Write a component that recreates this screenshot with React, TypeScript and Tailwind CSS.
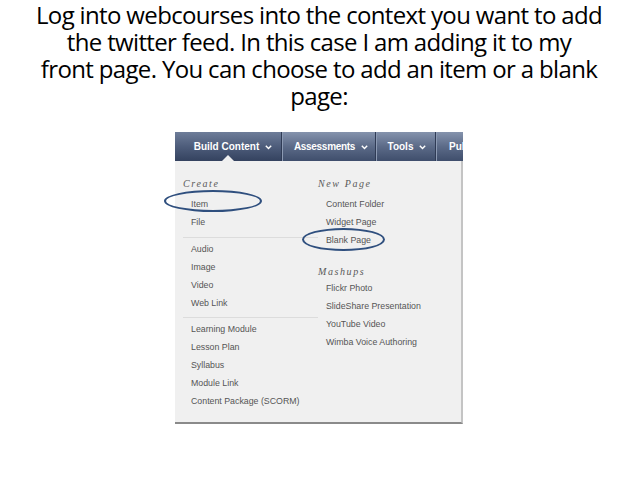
import React from "react"

const leftGroups: string[][] = [
  ["Item", "File"],
  ["Audio", "Image", "Video", "Web Link"],
  ["Learning Module", "Lesson Plan", "Syllabus", "Module Link", "Content Package (SCORM)"],
]

const newPage = ["Content Folder", "Widget Page", "Blank Page"]
const mashups = ["Flickr Photo", "SlideShare Presentation", "YouTube Video", "Wimba Voice Authoring"]

function Chevron() {
  return (
    <svg width="7" height="5" viewBox="0 0 7 5" className="ml-[6px] mt-[1px] shrink-0">
      <path d="M0.8 0.8 L3.5 3.6 L6.2 0.8" fill="none" stroke="#fff" strokeWidth="1.4" />
    </svg>
  )
}

function Heading({ children }: { children: string }) {
  return (
    <div className="flex h-[18px] items-center font-['Liberation_Serif',serif] text-[10px] italic tracking-[1.6px] text-[#5a5a5a]">
      {children}
    </div>
  )
}

function Row({ children }: { children: string }) {
  return (
    <div className="flex h-[18px] items-center pl-[8px] text-[8.8px] text-[#555]">{children}</div>
  )
}

export default function App() {
  return (
    <div className="h-[478px] w-[638px] overflow-hidden bg-white">
      {/* Slide title */}
      <div className="pt-[1px] text-center font-['Open_Sans',sans-serif] text-[24px] leading-[27px] tracking-[-0.65px] text-black">
        Log into webcourses into the context you want to add
        <br />
        the twitter feed. In this case I am adding it to my
        <br />
        front page. You can choose to add an item or a blank
        <br />
        page:
      </div>

      {/* Screenshot */}
      <div className="relative ml-[175px] mt-[23px] w-[288px] font-['Liberation_Sans',sans-serif]">
        <div className="flex h-[29px] overflow-hidden bg-gradient-to-b from-[#8593ad] via-[#5c6b88] to-[#3f4e6c] text-[10px] font-bold text-white">
          <div className="relative flex w-[106px] shrink-0 items-center justify-center bg-gradient-to-b from-[#6e7d99] via-[#4e5d7b] to-[#34425f] pl-[10px]">
            <span className="whitespace-nowrap">Build Content</span>
            <Chevron />
            <div className="absolute bottom-0 left-[47px] h-0 w-0 border-x-[6px] border-b-[6px] border-x-transparent border-b-[#f0f0f0]" />
          </div>
          <div className="w-px shrink-0 bg-[#2f3b55]" />
          <div className="flex w-[93px] shrink-0 items-center justify-center border-l border-[#8c9ab3] pl-[4px]">
            <span className="whitespace-nowrap tracking-[-0.3px]">Assessments</span>
            <Chevron />
          </div>
          <div className="w-px shrink-0 bg-[#2f3b55]" />
          <div className="flex w-[59px] shrink-0 items-center justify-center border-l border-[#8c9ab3] pl-[2px]">
            <span>Tools</span>
            <Chevron />
          </div>
          <div className="w-px shrink-0 bg-[#2f3b55]" />
          <div className="flex shrink-0 items-center border-l border-[#8c9ab3] pl-[12px]">
            <span>Publish</span>
          </div>
        </div>

        <div className="flex h-[263px] border-r-2 border-b-2 border-r-[#c4c4c4] border-b-[#8a8a8a] bg-[#f0f0f0]">
          <div className="w-[143px] pl-[8px] pt-[13px]">
            <Heading>Create</Heading>
            {leftGroups.map((group, gi) => (
              <div key={gi}>
                {gi > 0 && <div className={`h-px bg-[#dcdcdc] ${gi === 1 ? "mt-[5px] mb-[3px]" : "mt-[4px] mb-[3px]"}`} />}
                <div className={gi === 0 ? "mt-[4px]" : ""}>
                  {group.map((t) => (
                    <Row key={t}>{t}</Row>
                  ))}
                </div>
              </div>
            ))}
          </div>
          <div className="flex-1 pt-[13px]">
            <Heading>New Page</Heading>
            <div className="mt-[4px]">
              {newPage.map((t) => (
                <Row key={t}>{t}</Row>
              ))}
            </div>
            <div className="mt-[12px]">
              <Heading>Mashups</Heading>
            </div>
            {mashups.map((t) => (
              <Row key={t}>{t}</Row>
            ))}
          </div>
        </div>

        {/* hand-drawn ellipses */}
        <div className="absolute left-[-11px] top-[58px] h-[22px] w-[98px] rounded-[50%] border-2 border-[#2f4f7e]" />
        <div className="absolute left-[127px] top-[96px] h-[23px] w-[83px] rounded-[50%] border-2 border-[#2f4f7e]" />
      </div>
    </div>
  )
}
